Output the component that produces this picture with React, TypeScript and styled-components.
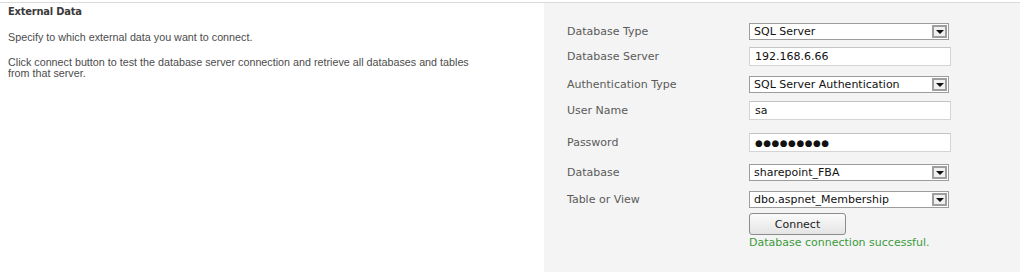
import React from "react";
import styled, { createGlobalStyle } from "styled-components";

const Global = createGlobalStyle`
  html, body { margin: 0; padding: 0; background: #ffffff; }
  body { width: 1024px; height: 276px; overflow: hidden; }
`;

const Page = styled.div`
  padding-top: 2px;
`;

const Section = styled.section`
  display: flex;
  border-top: 1px solid #dadada;
  width: 1020px;
`;

const Intro = styled.div`
  width: 536px;
  padding: 2px 0 0 8px;
  font-family: "Liberation Sans", Arial, sans-serif;
  font-size: 10.75px;
  color: #4c4c4c;
`;

const Heading = styled.h3`
  margin: 0 0 14px 0;
  font-size: 11px;
  font-weight: bold;
  color: #3a3a3a;
  font-family: "DejaVu Sans Condensed", "DejaVu Sans", sans-serif;
  letter-spacing: -0.2px;
`;

const Para = styled.p`
  margin: 0 0 14px 0;
  line-height: 11px;
  width: 480px;
`;

const Panel = styled.div`
  width: 453px;
  height: 269px;
  background: #f4f4f4;
  padding-left: 23px;
  display: grid;
  grid-template-columns: 182px 210px;
  grid-auto-rows: min-content;
  align-items: center;
  align-content: start;
  font-family: "DejaVu Sans", Verdana, sans-serif;
  font-size: 11px;
`;

const Label = styled.div<{ $top: number }>`
  color: #5a5a5a;
  margin-top: ${(p) => p.$top}px;
  line-height: 14px;
`;

const Cell = styled.div<{ $top: number }>`
  margin-top: ${(p) => p.$top}px;
`;

const TextBox = styled.div`
  box-sizing: border-box;
  width: 202px;
  height: 19px;
  background: #fff;
  border: 1px solid #d4d4d4;
  border-top-color: #c4c4c4;
  padding: 0 5px;
  line-height: 17px;
  color: #111;
  font-size: 11px;
`;

const Dots = styled.span`
  letter-spacing: 0.6px;
  font-size: 8.8px;
`;

const SelectBox = styled.div`
  box-sizing: border-box;
  width: 200px;
  height: 17px;
  background: #fff;
  border: 1px solid #9c9c9c;
  display: flex;
  align-items: center;
  justify-content: space-between;
  padding: 0 1px 0 4px;
  color: #111;
  font-size: 11px;
`;

const ArrowBtn = styled.span`
  box-sizing: border-box;
  width: 15px;
  height: 13px;
  border: 2px solid #9e9e9e;
  background: #f0f0f0;
  display: flex;
  align-items: center;
  justify-content: center;
`;

const Arrow = styled.span`
  width: 0;
  height: 0;
  border-left: 4px solid transparent;
  border-right: 4px solid transparent;
  border-top: 4px solid #111;
`;

const Button = styled.button`
  box-sizing: border-box;
  width: 97px;
  height: 22px;
  border: 1px solid #8c8c8c;
  border-radius: 3px;
  background: linear-gradient(#fbfbfb, #e4e4e4);
  font-family: "DejaVu Sans", Verdana, sans-serif;
  font-size: 11px;
  color: #222;
  padding: 0;
`;

const Success = styled.div`
  color: #3c9a3c;
  margin-top: 1px;
  font-size: 11px;
`;

const Select = ({ value }: { value: string }) => (
  <SelectBox>
    <span>{value}</span>
    <ArrowBtn>
      <Arrow />
    </ArrowBtn>
  </SelectBox>
);

export default function App() {
  return (
    <Page>
      <Global />
      <Section>
        <Intro>
          <Heading>External Data</Heading>
          <Para>Specify to which external data you want to connect.</Para>
          <Para>
            Click connect button to test the database server connection and retrieve all databases and tables
            from that server.
          </Para>
        </Intro>
        <Panel>
          <Label $top={20}>Database Type</Label>
          <Cell $top={20}>
            <Select value="SQL Server" />
          </Cell>
          <Label $top={7}>Database Server</Label>
          <Cell $top={7}>
            <TextBox>192.168.6.66</TextBox>
          </Cell>
          <Label $top={10}>Authentication Type</Label>
          <Cell $top={10}>
            <Select value="SQL Server Authentication" />
          </Cell>
          <Label $top={8}>User Name</Label>
          <Cell $top={8}>
            <TextBox>sa</TextBox>
          </Cell>
          <Label $top={13}>Password</Label>
          <Cell $top={13}>
            <TextBox>
              <Dots>●●●●●●●●●</Dots>
            </TextBox>
          </Cell>
          <Label $top={12}>Database</Label>
          <Cell $top={12}>
            <Select value="sharepoint_FBA" />
          </Cell>
          <Label $top={10}>Table or View</Label>
          <Cell $top={10}>
            <Select value="dbo.aspnet_Membership" />
          </Cell>
          <span />
          <Cell $top={5}>
            <Button>Connect</Button>
            <Success>Database connection successful.</Success>
          </Cell>
        </Panel>
      </Section>
    </Page>
  );
}
